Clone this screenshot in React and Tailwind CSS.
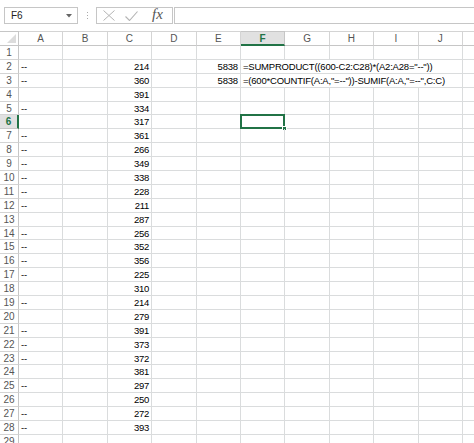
import React from "react";

const COLS = ["A", "B", "C", "D", "E", "F", "G", "H", "I", "J", ""];

const DATA = [
  ["--", 214], ["--", 360], ["", 391], ["--", 334], ["", 317], ["--", 361], ["--", 266],
  ["--", 349], ["--", 338], ["--", 228], ["--", 211], ["", 287], ["--", 256], ["--", 352],
  ["--", 356], ["--", 225], ["", 310], ["--", 214], ["", 279], ["--", 391], ["--", 373],
  ["--", 372], ["", 381], ["--", 297], ["", 250], ["--", 272], ["--", 393],
];

const FORMULAS = {
  2: '=SUMPRODUCT((600-C2:C28)*(A2:A28="--"))',
  3: '=(600*COUNTIF(A:A,"=--"))-SUMIF(A:A,"=--",C:C)',
};

const font = { fontFamily: '"Liberation Sans", Arial, sans-serif' };

function Cell({ children, className = "" }) {
  return (
    <div className={`h-[13.9px] border-r border-b border-[#dadcdd] text-[9.5px] tracking-[-0.2px] leading-[13px] text-black whitespace-nowrap overflow-visible ${className}`}>
      {children}
    </div>
  );
}

function Row({ n }) {
  const active = n === 6;
  const d = n >= 2 && n <= 28 ? DATA[n - 2] : null;
  const formula = FORMULAS[n];
  return (
    <>
      <div
        className={`h-[13.9px] border-b text-[10px] leading-[13px] text-center ${
          active
            ? "bg-[#e1e1e1] border-[#c6c6c6] border-r-2 border-r-[#217346] text-[#217346] font-bold"
            : "bg-white border-[#d4d4d4] border-r border-r-[#c6c6c6] text-[#555]"
        }`}
      >
        {n}
      </div>
      <Cell className="pl-[2px]">{d ? d[0] : ""}</Cell>
      <Cell />
      <Cell className="text-right pr-[2px]">{d ? d[1] : ""}</Cell>
      <Cell />
      <Cell className="text-right pr-[2px]">{formula ? 5838 : ""}</Cell>
      {formula ? (
        <Cell className="col-span-5 pl-[2px]">{formula}</Cell>
      ) : (
        <>
          <Cell className="relative">
            {active && (
              <div className="absolute -left-px -top-px -right-px -bottom-px border-2 border-[#217346]">
                <div className="absolute -right-[4px] -bottom-[4px] w-[5px] h-[5px] bg-[#217346] border border-white" />
              </div>
            )}
          </Cell>
          <Cell />
          <Cell />
          <Cell />
          <Cell />
        </>
      )}
      <Cell className="border-r-0" />
    </>
  );
}

export default function App() {
  const rows = Array.from({ length: 29 }, (_, i) => i + 1);
  return (
    <div className="w-[474px] h-[443px] overflow-hidden bg-white" style={font}>
      {/* Formula bar */}
      <div className="h-[31px] flex items-start pt-[7px] pl-[4px]">
        <div className="w-[74px] h-[17px] border border-[#c6c6c6] flex items-center justify-between pl-[6px] pr-[5px] text-[10px] text-[#222]">
          <span>F6</span>
          <svg width="6" height="4" viewBox="0 0 6 4">
            <path d="M0 0h6L3 3.5z" fill="#666" />
          </svg>
        </div>
        <div className="w-[18px] h-[17px] flex flex-col items-center justify-center gap-[2px]">
          <span className="w-[1px] h-[1px] bg-[#aaa]" />
          <span className="w-[1px] h-[1px] bg-[#aaa]" />
          <span className="w-[1px] h-[1px] bg-[#aaa]" />
        </div>
        <div className="w-[77px] h-[17px] border border-[#c6c6c6] flex items-center">
          <svg width="12" height="11" viewBox="0 0 12 11" className="ml-[6px]">
            <path d="M0.5 0.5l11 10M11.5 0.5l-11 10" stroke="#b4b4b4" strokeWidth="1" fill="none" />
          </svg>
          <svg width="13" height="10" viewBox="0 0 13 10" className="ml-[10px]">
            <path d="M0.5 5.5l4 4L12.5 0.5" stroke="#b4b4b4" strokeWidth="1.1" fill="none" />
          </svg>
          <span
            className="ml-[14px] text-[15px] italic text-[#555] leading-none -mt-[2px]"
            style={{ fontFamily: '"Liberation Serif", "Times New Roman", serif' }}
          >
            fx
          </span>
        </div>
        <div className="flex-1 h-[17px] ml-[1px] border border-r-0 border-[#c6c6c6]" />
      </div>

      {/* Grid */}
      <div className="grid grid-cols-[19px_repeat(10,44.4px)_1fr]">
        <div className="h-[15px] border-t border-b border-r border-[#c6c6c6] relative">
          <svg width="9" height="9" viewBox="0 0 9 9" className="absolute right-[2px] bottom-[2px]">
            <path d="M9 0V9H0z" fill="#dcdcdc" />
          </svg>
        </div>
        {COLS.map((c, i) => (
          <div
            key={i}
            className={`h-[15px] border-t border-r text-[10px] leading-[13px] text-center ${
              c === "F"
                ? "bg-[#e1e1e1] border-[#c6c6c6] border-b-2 border-b-[#217346] text-[#217346] font-bold"
                : "bg-white border-[#d4d4d4] border-b border-b-[#c6c6c6] text-[#555]"
            } ${i === COLS.length - 1 ? "border-r-0" : ""}`}
          >
            {c}
          </div>
        ))}
        {rows.map((n) => (
          <Row key={n} n={n} />
        ))}
      </div>
    </div>
  );
}
